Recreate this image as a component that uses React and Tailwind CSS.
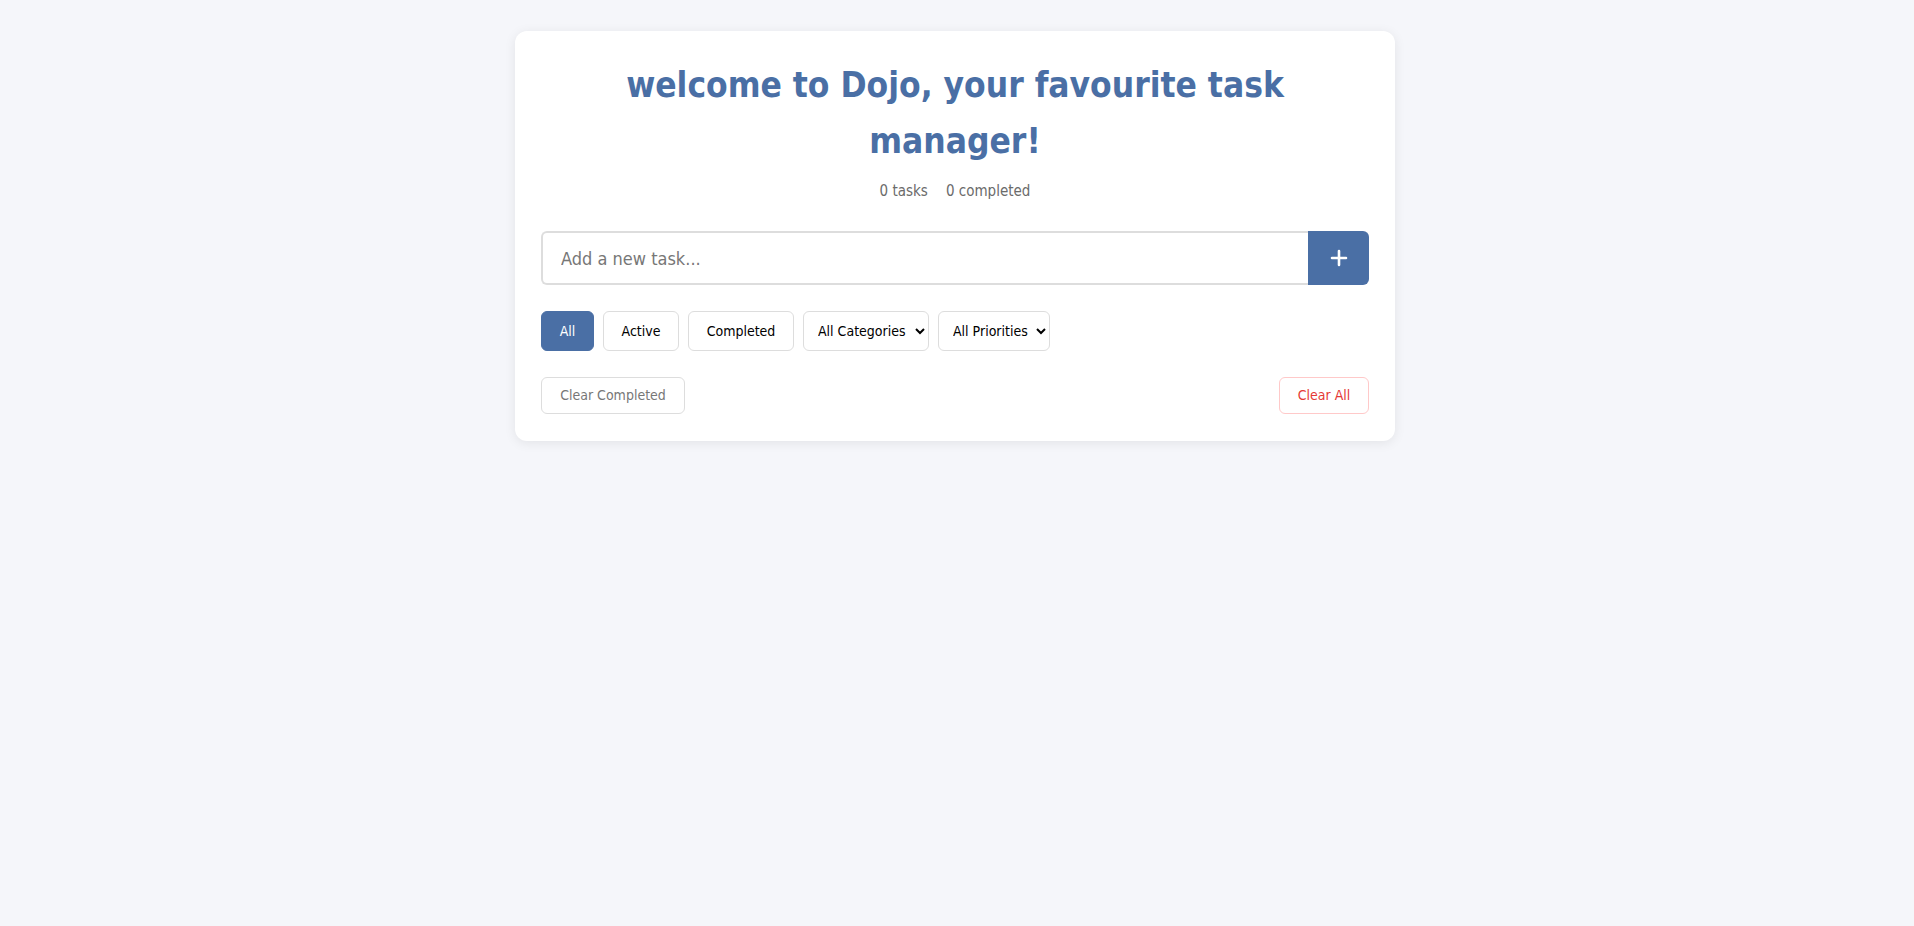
import { useState } from 'react';

const FONT = "font-['DejaVu_Sans_Condensed','DejaVu_Sans',sans-serif]";

export default function App() {
  const [filter, setFilter] = useState('all');
  const [text, setText] = useState('');

  const filters = [
    { id: 'all', label: 'All', w: 'w-[53px]' },
    { id: 'active', label: 'Active', w: 'w-[76px]' },
    { id: 'completed', label: 'Completed', w: 'w-[106px]' },
  ];

  return (
    <div className={`min-h-screen bg-[#f5f6fa] pt-[31px] pr-[4px] ${FONT}`}>
      <div className="mx-auto w-[880px] rounded-xl bg-white px-[26px] pt-[26px] pb-[27px] shadow-[0_2px_12px_rgba(0,0,0,0.08)]">
        {/* Header */}
        <h1 className="mx-auto max-w-[700px] text-center text-[35px] font-bold leading-[56px] text-[#4a6fa5]">
          welcome to Dojo, your favourite task manager!
        </h1>
        <div className="mt-[10px] flex justify-center gap-[18px] text-[15px] leading-6 text-[#6b6b6b]">
          <span>0 tasks</span>
          <span>0 completed</span>
        </div>

        {/* Add task */}
        <div className="mt-[28px] flex">
          <input
            value={text}
            onChange={(e) => setText(e.target.value)}
            placeholder="Add a new task..."
            className="h-[54px] flex-1 rounded-l-md border-2 border-r-0 border-[#dddddd] px-[18px] text-[18px] text-[#333] outline-none placeholder:text-[#777]"
          />
          <button className="flex h-[54px] w-[61px] items-center justify-center rounded-r-md bg-[#4a6fa5] text-white">
            <svg width="18" height="18" viewBox="0 0 18 18" fill="none" stroke="currentColor" strokeWidth="2.6" strokeLinecap="round">
              <path d="M9 2v14M2 9h14" />
            </svg>
          </button>
        </div>

        {/* Filters */}
        <div className="mt-[26px] flex items-center gap-[9px] text-[14px]">
          {filters.map((f) => (
            <button
              key={f.id}
              onClick={() => setFilter(f.id)}
              className={`h-[40px] ${f.w} rounded-md border ${
                filter === f.id
                  ? 'border-[#4a6fa5] bg-[#4a6fa5] text-white'
                  : 'border-[#dddddd] bg-white text-black'
              }`}
            >
              {f.label}
            </button>
          ))}
          <select className="h-[40px] w-[126px] rounded-md border border-[#dddddd] bg-white pl-[10px] pr-0 text-black">
            <option>All Categories</option>
            <option>Work</option>
            <option>Personal</option>
          </select>
          <select className="h-[40px] w-[112px] rounded-md border border-[#dddddd] bg-white pl-[10px] pr-0 text-black">
            <option>All Priorities</option>
            <option>High</option>
            <option>Medium</option>
            <option>Low</option>
          </select>
        </div>

        {/* Bulk actions */}
        <div className="mt-[26px] flex justify-between text-[14px]">
          <button className="h-[37px] w-[144px] rounded-md border border-[#dddddd] bg-white text-[#777]">
            Clear Completed
          </button>
          <button className="h-[37px] w-[90px] rounded-md border border-[#ffc9c9] bg-white text-[#e53935]">
            Clear All
          </button>
        </div>
      </div>
    </div>
  );
}
